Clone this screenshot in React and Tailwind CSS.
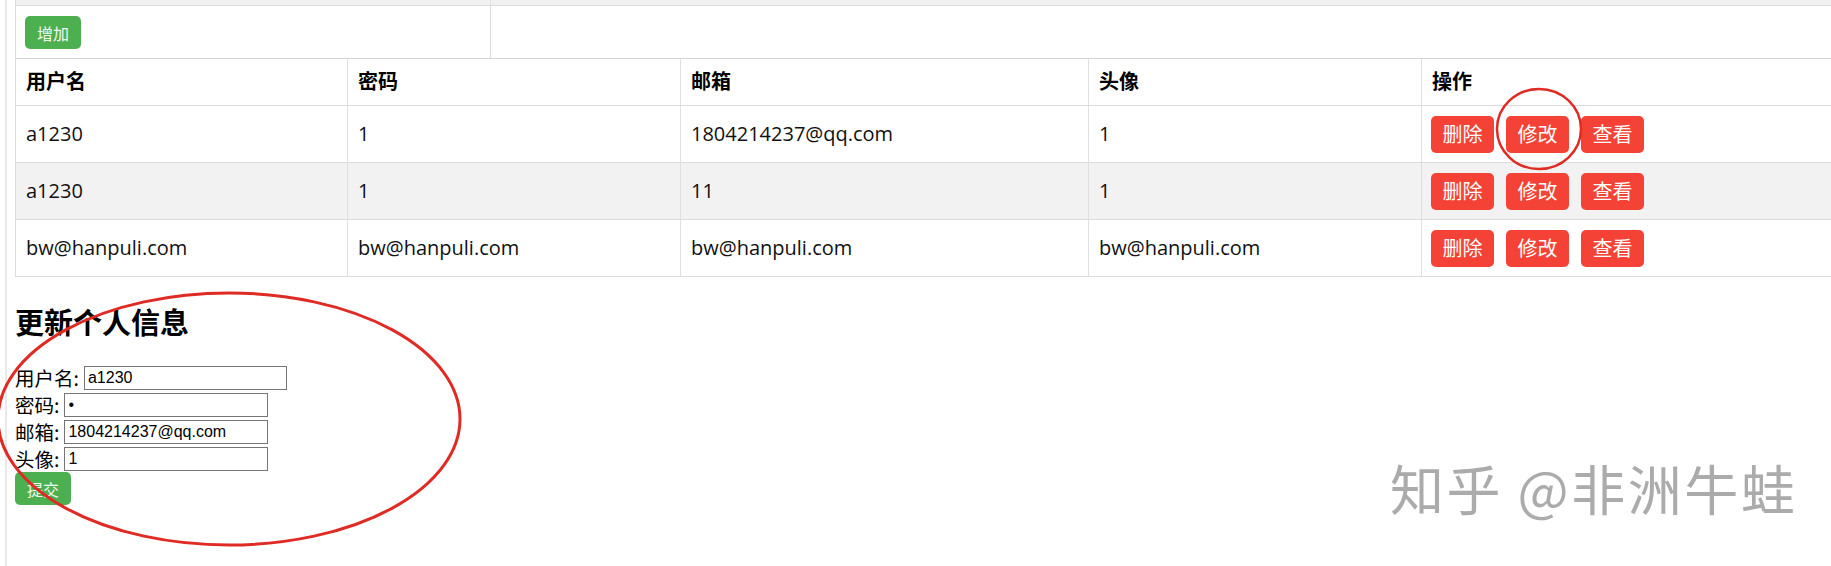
import React from "react";

const rows = [
  { name: "a1230", pwd: "1", email: "1804214237@qq.com", avatar: "1" },
  { name: "a1230", pwd: "1", email: "11", avatar: "1" },
  { name: "bw@hanpuli.com", pwd: "bw@hanpuli.com", email: "bw@hanpuli.com", avatar: "bw@hanpuli.com" },
];

const cell = "flex items-center px-[10px] border-r border-[#e0e0e0] shrink-0";

function ActionButton({ children }) {
  return (
    <button className="w-[63px] h-[37px] rounded-[5px] bg-[#f44336] text-white text-[20px] leading-none font-['Noto_Sans_CJK_SC',sans-serif]">
      {children}
    </button>
  );
}

function FormRow({ label, children }) {
  return (
    <div className="flex items-center h-[27px]">
      <span className="text-[19.5px] leading-none text-black">{label}:</span>
      {children}
    </div>
  );
}

export default function App() {
  return (
    <div className="relative w-[1831px] h-[566px] overflow-hidden bg-white font-['Open_Sans','Noto_Sans_CJK_SC',sans-serif]">
      <div className="ml-[5px] h-full border-l-2 border-[#e9e9e9] pl-[8px]">
        {/* table */}
        <div className="border-l border-[#dcdcdc] w-[1900px] text-[20px] leading-[26px] text-[#111]">
          <div className="flex h-[6px] bg-[#f1f1f1] border-b border-[#dcdcdc]">
            <div className="w-[475px] border-r border-[#e0e0e0]" />
          </div>
          <div className="flex h-[53px] border-b border-[#d4d4d4]">
            <div className="w-[475px] border-r border-[#dcdcdc] pl-[9px] pt-[10px]">
              <button className="w-[56px] h-[33px] rounded-[5px] bg-[#4caf50] text-[#f1f8f1] text-[16px] leading-none font-['Noto_Sans_CJK_SC',sans-serif]">
                增加
              </button>
            </div>
          </div>
          <div className="flex h-[47px] border-b border-[#dcdcdc] font-bold text-black">
            <div className={cell + " w-[332px]"}>用户名</div>
            <div className={cell + " w-[333px]"}>密码</div>
            <div className={cell + " w-[408px]"}>邮箱</div>
            <div className={cell + " w-[333px]"}>头像</div>
            <div className="flex items-center px-[10px] flex-1">操作</div>
          </div>
          {rows.map((r, i) => (
            <div
              key={i}
              className={
                "flex h-[57px] border-b border-[#dcdcdc] " + (i === 1 ? "bg-[#f2f2f2]" : "bg-white")
              }
            >
              <div className={cell + " w-[332px]"}>{r.name}</div>
              <div className={cell + " w-[333px]"}>{r.pwd}</div>
              <div className={cell + " w-[408px]"}>{r.email}</div>
              <div className={cell + " w-[333px]"}>{r.avatar}</div>
              <div className="flex items-center gap-[12px] pl-[9px] flex-1">
                <ActionButton>删除</ActionButton>
                <ActionButton>修改</ActionButton>
                <ActionButton>查看</ActionButton>
              </div>
            </div>
          ))}
        </div>

        {/* form */}
        <h2 className="mt-[26px] text-[29px] leading-[36px] font-bold text-black font-['Noto_Sans_CJK_SC',sans-serif]">
          更新个人信息
        </h2>
        <form className="mt-[25px] font-['Noto_Sans_CJK_SC',sans-serif]" onSubmit={(e) => e.preventDefault()}>
          <FormRow label="用户名">
            <input
              readOnly
              value="a1230"
              className="ml-[5px] w-[203px] h-[24px] border border-[#767676] pl-[3px] text-[16px] font-['Liberation_Sans',Arial,sans-serif] text-black outline-none"
            />
          </FormRow>
          <FormRow label="密码">
            <input
              readOnly
              type="password"
              value="1"
              className="ml-[5px] w-[204px] h-[24px] border border-[#767676] pl-[3px] text-[16px] font-['Liberation_Sans',Arial,sans-serif] text-black outline-none"
            />
          </FormRow>
          <FormRow label="邮箱">
            <input
              readOnly
              value="1804214237@qq.com"
              className="ml-[5px] w-[204px] h-[24px] border border-[#767676] pl-[3px] text-[16px] font-['Liberation_Sans',Arial,sans-serif] text-black outline-none"
            />
          </FormRow>
          <FormRow label="头像">
            <input
              readOnly
              value="1"
              className="ml-[5px] w-[204px] h-[24px] border border-[#767676] pl-[3px] text-[16px] font-['Liberation_Sans',Arial,sans-serif] text-black outline-none"
            />
          </FormRow>
          <button
            type="submit"
            className="w-[56px] h-[33px] rounded-[5px] bg-[#4caf50] text-[#f1f8f1] text-[16px] leading-none"
          >
            提交
          </button>
        </form>
      </div>

      {/* watermark */}
      <div className="absolute left-[1390px] top-[461px] text-[54px] tracking-[2.5px] leading-none text-[#ababab] font-['Noto_Sans_CJK_SC',sans-serif] whitespace-nowrap pointer-events-none">
        知乎 @非洲牛蛙
      </div>

      {/* red annotation marks */}
      <svg className="absolute inset-0 pointer-events-none" width="1831" height="566" viewBox="0 0 1831 566">
        <ellipse cx="1539" cy="129" rx="42" ry="40" fill="none" stroke="#df2b24" strokeWidth="2.5" />
        <ellipse cx="229" cy="419" rx="231" ry="126" fill="none" stroke="#df2b24" strokeWidth="3" />
      </svg>
    </div>
  );
}
